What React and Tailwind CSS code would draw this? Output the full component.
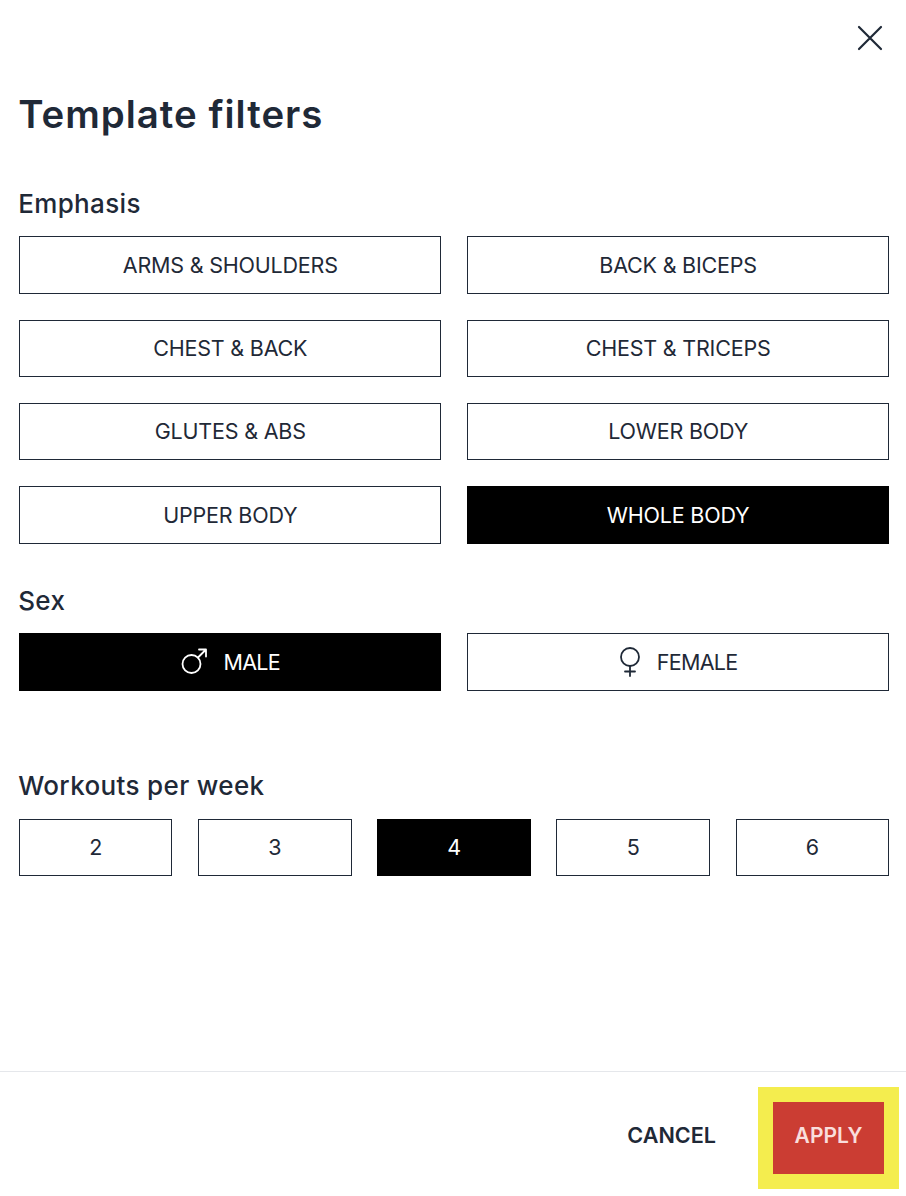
const ink = 'text-[#1f2937]';

function OptionButton({ label, active, icon }) {
  return (
    <button
      className={`h-[57.6px] flex items-center justify-center gap-[16px] border text-[21.5px] ${icon ? 'tracking-[-0.7px]' : 'tracking-[-0.2px]'} ${active ? 'bg-black border-black text-white' : 'bg-white border-[#1f2937] text-[#1f2937]'}`}
    >
      {icon}
      <span>{label}</span>
    </button>
  );
}

function MaleIcon() {
  return (
    <svg width="27" height="27" viewBox="0 0 27 27" fill="none" stroke="currentColor" strokeWidth="1.8" strokeLinecap="round" strokeLinejoin="round">
      <circle cx="10.5" cy="16" r="9" />
      <path d="M17 9.5 25 1.5M18 1.5h7v7" />
    </svg>
  );
}

function FemaleIcon() {
  return (
    <svg width="22" height="30" viewBox="0 0 22 30" fill="none" stroke="currentColor" strokeWidth="1.8" strokeLinecap="round" strokeLinejoin="round">
      <circle cx="11" cy="10" r="9" />
      <path d="M11 19v10M6 24.5h10" />
    </svg>
  );
}

export default function App() {
  const emphasis = ['ARMS & SHOULDERS', 'BACK & BICEPS', 'CHEST & BACK', 'CHEST & TRICEPS', 'GLUTES & ABS', 'LOWER BODY', 'UPPER BODY', 'WHOLE BODY'];

  return (
    <div className="w-[906px] h-[1196px] bg-white flex flex-col overflow-hidden" style={{ fontFamily: 'Inter, "Noto Sans", sans-serif' }}>
      <div className="h-[1071px] pl-[19.2px] pr-[16.8px]">
        {/* Close */}
        <div className="flex justify-end pt-[24px] pr-[5px] h-[62px]">
          <svg width="28" height="28" viewBox="0 0 28 28" fill="none" stroke="#1f2937" strokeWidth="2.2" strokeLinecap="round">
            <path d="M3 3l22 22M25 3 3 25" />
          </svg>
        </div>

        <h1 className={`text-[38.4px] leading-[52px] font-semibold tracking-[1px] -ml-[1px] mt-[26px] ${ink}`}>Template filters</h1>

        <h2 className={`text-[26px] leading-[36px] font-medium tracking-[0.35px] -ml-[1px] mt-[46px] ${ink}`}>Emphasis</h2>
        <div className="grid grid-cols-2 gap-x-[25.6px] gap-y-[25.6px] mt-[14.4px]">
          {emphasis.map((e) => (
            <OptionButton key={e} label={e} active={e === 'WHOLE BODY'} />
          ))}
        </div>

        <h2 className={`text-[26px] leading-[36px] font-medium tracking-[0.35px] -ml-[1px] mt-[39px] ${ink}`}>Sex</h2>
        <div className="grid grid-cols-2 gap-x-[25.6px] mt-[14.5px]">
          <OptionButton label="MALE" active icon={<MaleIcon />} />
          <OptionButton label="FEMALE" icon={<FemaleIcon />} />
        </div>

        <h2 className={`text-[26px] leading-[36px] font-medium tracking-[0.35px] -ml-[1px] mt-[77px] ${ink}`}>Workouts per week</h2>
        <div className="grid grid-cols-5 gap-x-[25.7px] w-[870.2px] -ml-[0.3px] mt-[15px]">
          {['2', '3', '4', '5', '6'].map((n) => (
            <OptionButton key={n} label={n} active={n === '4'} />
          ))}
        </div>
      </div>

      {/* Footer */}
      <div className="flex-1 border-t border-[#e5e7eb] flex items-start justify-end gap-[42px] pt-[15px] pr-[7px]">
        <button className={`h-[102px] pb-[5px] text-[21.6px] font-semibold ${ink}`}>CANCEL</button>
        <button className="w-[141px] h-[102px] border-[15px] border-[#f4ed4e] bg-[#cb3d33] pb-[5px] text-[21px] font-semibold text-[#f9dedc]">APPLY</button>
      </div>
    </div>
  );
}
